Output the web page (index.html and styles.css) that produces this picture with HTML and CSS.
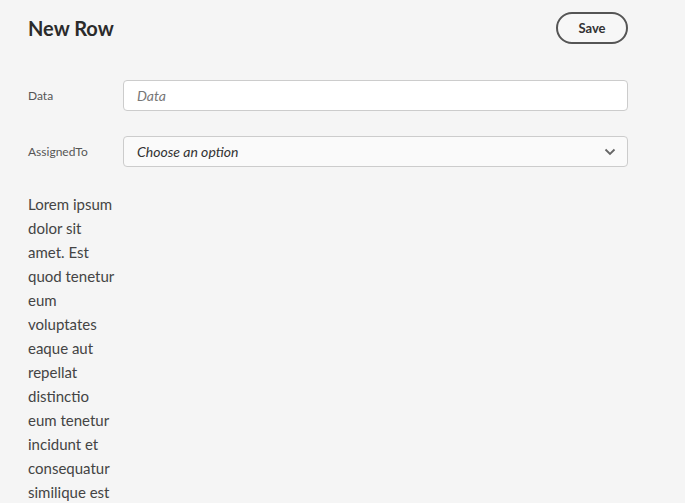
FILE: index.html
```html
<!DOCTYPE html>
<html lang="en">
<head>
    <meta charset="UTF-8">
    <meta name="viewport" content="width=device-width, initial-scale=1.0">
    <title>New Row</title>
    <link rel="stylesheet" href="styles.css">
</head>
<body>
    <div class="page">
        <div class="header">
            <h1>New Row</h1>
            <button type="button" class="save-btn">Save</button>
        </div>
        <form class="row-form">
            <div class="form-row">
                <label for="data">Data</label>
                <input type="text" id="data" name="data" placeholder="Data">
            </div>
            <div class="form-row">
                <label for="assigned">AssignedTo</label>
                <div class="select-wrap">
                    <select id="assigned" name="assigned">
                        <option>Choose an option</option>
                    </select>
                    <svg class="chevron" width="12" height="8" viewBox="0 0 12 8"><path d="M1.5 1.5 6 6l4.5-4.5" fill="none" stroke="#666" stroke-width="1.8"/></svg>
                </div>
            </div>
        </form>
        <p class="notes">Lorem ipsum<br>dolor sit<br>amet. Est<br>quod tenetur<br>eum<br>voluptates<br>eaque aut<br>repellat<br>distinctio<br>eum tenetur<br>incidunt et<br>consequatur<br>similique est</p>
    </div>
</body>
</html>
```

FILE: styles.css
```css
body {
    font-family: Lato, "Liberation Sans", sans-serif;
    margin: 0;
    background-color: #f5f5f5;
    color: #333;
}
.page {
    padding: 12px 57px 0 28px;
}
.header {
    display: flex;
    justify-content: space-between;
    align-items: center;
    height: 32px;
}
.header h1 {
    margin: 0;
    font-size: 20px;
    font-weight: 700;
    color: #2b2b2b;
}
.save-btn {
    width: 72px;
    height: 32px;
    border: 2px solid #555;
    border-radius: 16px;
    background: #f7f7f7;
    font-family: inherit;
    font-size: 13px;
    font-weight: 700;
    color: #333;
}
.row-form {
    margin-top: 36px;
}
.form-row {
    display: flex;
    align-items: center;
    margin-bottom: 25px;
}
.form-row label {
    width: 95px;
    flex-shrink: 0;
    font-size: 12px;
    color: #555;
}
input[type="text"],
select {
    width: 100%;
    height: 31px;
    padding: 0 13px;
    border: 1px solid #ccc;
    border-radius: 4px;
    box-sizing: border-box;
    font-family: inherit;
    font-size: 14px;
    font-style: italic;
    background-color: #fff;
}
input::placeholder {
    color: #777;
}
.select-wrap {
    position: relative;
    flex: 1;
}
select {
    appearance: none;
    background-color: #fafafa;
    color: #333;
}
.chevron {
    position: absolute;
    right: 12px;
    top: 12px;
}
.notes {
    margin: 0;
    font-size: 15px;
    line-height: 24px;
    color: #444;
}
```
